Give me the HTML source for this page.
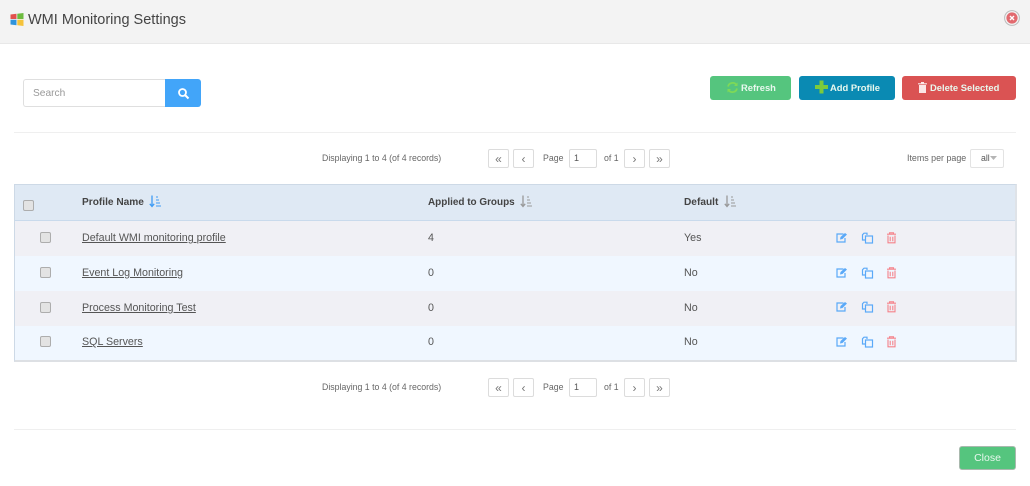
<!DOCTYPE html>
<html><head><meta charset="utf-8">
<style>
html,body{margin:0;padding:0;background:#fff}
#p{position:relative;width:1030px;height:486px;overflow:hidden;background:#fff;font-family:"Liberation Sans",sans-serif;color:#555}
#p div,#p svg,#p a{position:absolute}
.t{white-space:nowrap;line-height:14px}
.b{border-radius:3px;color:#e8f8ee;font-size:9.4px;font-weight:bold;line-height:23px;height:24px;white-space:nowrap;text-align:left}
.pg{width:19px;height:17px;border:1px solid #dcdcdc;border-radius:2px;background:#fff;color:#777;font-size:12px;line-height:18px;text-align:center}
.in{border:1px solid #dcdcdc;border-radius:2px;background:#fff;color:#555;font-size:9px;line-height:17px}
.s{font-size:8.75px;color:#666}
.cb{width:9px;height:9px;background:#e3e3e3;border:1px solid #adadad;border-radius:2px}
.r{left:15px;width:1000px;height:35px}
.c{font-size:10.7px;color:#555}
.h{font-size:10.15px;font-weight:bold;color:#444}
a{color:#555;text-decoration:underline}
</style></head><body><div id="p">

<div style="left:0;top:0;width:1030px;height:43px;background:#f3f3f3;border-bottom:1px solid #e8e8e8"></div>
<svg style="left:10px;top:13px" width="14" height="13" viewBox="0 0 14 13"><path d="M0.5 1.5L6.5 0.8V6H0.5Z" fill="#e2504c"/><path d="M7.3 0.7L13.5 0V6H7.3Z" fill="#6cbb3f"/><path d="M0.5 6.8H6.5V12.2L0.5 11.5Z" fill="#2f94dc"/><path d="M7.3 6.8H13.5V13L7.3 12.3Z" fill="#f5c33b"/></svg>
<div class="t" style="left:28px;top:12px;font-size:14.5px;color:#444;line-height:17px">WMI Monitoring Settings</div>
<svg style="left:1004px;top:10px" width="16" height="16" viewBox="0 0 16 16"><circle cx="8" cy="8" r="7.4" fill="#f4f4f4" stroke="#bbb" stroke-width="1"/><circle cx="8" cy="8" r="5.6" fill="#e26a6f"/><path d="M6 6L10 10M10 6L6 10" stroke="#fff" stroke-width="1.4"/></svg>

<div style="left:23px;top:79px;width:142px;height:26px;border:1px solid #dfdfdf;border-right:0;border-radius:3px 0 0 3px;background:#fff"></div>
<div class="t" style="left:33px;top:86px;font-size:10.2px;color:#999;line-height:15px">Search</div>
<div style="left:165px;top:79px;width:36px;height:28px;background:#42a5f9;border-radius:0 3px 3px 0"></div>
<svg style="left:177px;top:87px" width="13" height="13" viewBox="0 0 13 13"><circle cx="5.5" cy="5.5" r="3.5" fill="none" stroke="#fff" stroke-width="1.8"/><path d="M8 8L11.5 11.5" stroke="#fff" stroke-width="2"/></svg>

<div class="b" style="left:710px;top:76px;width:81px;background:#55c57e"><span style="margin-left:31px">Refresh</span></div>
<svg style="left:726px;top:81px" width="13" height="13" viewBox="0 0 13 13"><path d="M2 5.5A4.7 4.7 0 0 1 10.5 4M11 7.5A4.7 4.7 0 0 1 2.5 9" fill="none" stroke="#7ed957" stroke-width="1.8"/><path d="M11.5 1.5V5H8ZM1.5 11.5V8H5Z" fill="#7ed957"/></svg>
<div class="b" style="left:799px;top:76px;width:96px;background:#0a8ab3"><span style="margin-left:31px">Add Profile</span></div>
<svg style="left:815px;top:80px" width="13" height="14" viewBox="0 0 13 14"><path d="M4.5 0.5H8.5V5H13V9H8.5V13.5H4.5V9H0V5H4.5Z" fill="#7ccb3c"/></svg>
<div class="b" style="left:902px;top:76px;width:114px;background:#da5353"><span style="margin-left:28px">Delete Selected</span></div>
<svg style="left:918px;top:82px" width="9" height="11" viewBox="0 0 9 11"><path d="M0 1.2H3V0H6V1.2H9V2.4H0ZM1 3H8V11H1Z" fill="#fbe6e6"/></svg>

<div style="left:14px;top:132px;width:1002px;height:1px;background:#efefef"></div>

<div class="t s" style="left:322px;top:151px">Displaying 1 to 4 (of 4 records)</div>
<div class="pg" style="left:488px;top:149px">«</div><div class="pg" style="left:513px;top:149px">‹</div>
<div class="t s" style="left:543px;top:151px">Page</div>
<div class="in" style="left:569px;top:149px;width:22px;height:17px;padding-left:4px">1</div>
<div class="t s" style="left:604px;top:151px">of 1</div>
<div class="pg" style="left:624px;top:149px">›</div><div class="pg" style="left:649px;top:149px">»</div>
<div class="t s" style="left:907px;top:151px;font-size:8.9px">Items per page</div>
<div style="left:970px;top:149px;width:32px;height:17px;border:1px solid #e3e3e3;border-radius:2px;background:#fff"></div>
<div class="t s" style="left:981px;top:151px;color:#555">all</div>
<svg style="left:990px;top:156px" width="7" height="4" viewBox="0 0 7 4"><path d="M0 0H7L3.5 4Z" fill="#b5b5b5"/></svg>

<div style="left:14px;top:184px;width:1000px;height:175px;border:1px solid #cdd9e6;border-right:2px solid #dfe3e8;border-bottom:2px solid #dde0e4"></div>
<div class="r" style="top:185px;height:35px;background:#dfe9f4;border-bottom:1px solid #c9daec"></div>
<div class="r" style="top:221px;height:35px;background:#f0f0f5"></div>
<div class="r" style="top:256px;background:#f0f7ff"></div>
<div class="r" style="top:291px;background:#f0f0f5"></div>
<div class="r" style="top:326px;height:34px;background:#f0f7ff"></div>

<div class="cb" style="left:23px;top:200px"></div>
<div class="t h" style="left:82px;top:196px">Profile Name</div>
<svg style="left:149px;top:195px" width="12" height="13" viewBox="0 0 12 13"><path d="M3 0.5V11M0.8 8.8L3 11.5L5.2 8.8" fill="none" stroke="#3f9cf5" stroke-width="1.3"/><path d="M7 2H9M7 5H10M7 8H11M7 11H12" stroke="#3f9cf5" stroke-width="1.1"/></svg>
<div class="t h" style="left:428px;top:196px;font-size:9.95px">Applied to Groups</div>
<svg style="left:520px;top:195px" width="12" height="13" viewBox="0 0 12 13"><path d="M3 0.5V11M0.8 8.8L3 11.5L5.2 8.8" fill="none" stroke="#999" stroke-width="1.3"/><path d="M7 2H9M7 5H10M7 8H11M7 11H12" stroke="#999" stroke-width="1.1"/></svg>
<div class="t h" style="left:684px;top:196px">Default</div>
<svg style="left:724px;top:195px" width="12" height="13" viewBox="0 0 12 13"><path d="M3 0.5V11M0.8 8.8L3 11.5L5.2 8.8" fill="none" stroke="#999" stroke-width="1.3"/><path d="M7 2H9M7 5H10M7 8H11M7 11H12" stroke="#999" stroke-width="1.1"/></svg>

<div class="cb" style="left:40px;top:232px"></div>
<a class="t c" style="left:82px;top:231px">Default WMI monitoring profile</a>
<div class="t c" style="left:428px;top:231px">4</div>
<div class="t c" style="left:684px;top:231px">Yes</div>

<div class="cb" style="left:40px;top:267px"></div>
<a class="t c" style="left:82px;top:266px">Event Log Monitoring</a>
<div class="t c" style="left:428px;top:266px">0</div>
<div class="t c" style="left:684px;top:266px">No</div>

<div class="cb" style="left:40px;top:302px"></div>
<a class="t c" style="left:82px;top:301px">Process Monitoring Test</a>
<div class="t c" style="left:428px;top:301px">0</div>
<div class="t c" style="left:684px;top:301px">No</div>

<div class="cb" style="left:40px;top:336px"></div>
<a class="t c" style="left:82px;top:335px">SQL Servers</a>
<div class="t c" style="left:428px;top:335px">0</div>
<div class="t c" style="left:684px;top:335px">No</div>

<svg style="left:836px;top:232px" width="60" height="12" viewBox="0 0 60 12"><g fill="none" stroke="#5aa9f8" stroke-width="1.2"><path d="M7.5 2H1V10H9V6"/><path d="M4 7.5L4.5 5L9 1L11 2.5L6.5 7Z" fill="#5aa9f8" stroke="none"/><path d="M31 3V1.2H28L26.5 2.7V8H29"/><rect x="29.5" y="4" width="7" height="7"/></g><path d="M51 2.2H60M53.5 2V0.8H57.5V2M52 3.5V10.8H59V3.5M54.2 4.8V9.3M56.8 4.8V9.3" fill="none" stroke="#f5828a" stroke-width="1.1"/></svg>
<svg style="left:836px;top:267px" width="60" height="12" viewBox="0 0 60 12"><g fill="none" stroke="#5aa9f8" stroke-width="1.2"><path d="M7.5 2H1V10H9V6"/><path d="M4 7.5L4.5 5L9 1L11 2.5L6.5 7Z" fill="#5aa9f8" stroke="none"/><path d="M31 3V1.2H28L26.5 2.7V8H29"/><rect x="29.5" y="4" width="7" height="7"/></g><path d="M51 2.2H60M53.5 2V0.8H57.5V2M52 3.5V10.8H59V3.5M54.2 4.8V9.3M56.8 4.8V9.3" fill="none" stroke="#f5828a" stroke-width="1.1"/></svg>
<svg style="left:836px;top:301px" width="60" height="12" viewBox="0 0 60 12"><g fill="none" stroke="#5aa9f8" stroke-width="1.2"><path d="M7.5 2H1V10H9V6"/><path d="M4 7.5L4.5 5L9 1L11 2.5L6.5 7Z" fill="#5aa9f8" stroke="none"/><path d="M31 3V1.2H28L26.5 2.7V8H29"/><rect x="29.5" y="4" width="7" height="7"/></g><path d="M51 2.2H60M53.5 2V0.8H57.5V2M52 3.5V10.8H59V3.5M54.2 4.8V9.3M56.8 4.8V9.3" fill="none" stroke="#f5828a" stroke-width="1.1"/></svg>
<svg style="left:836px;top:336px" width="60" height="12" viewBox="0 0 60 12"><g fill="none" stroke="#5aa9f8" stroke-width="1.2"><path d="M7.5 2H1V10H9V6"/><path d="M4 7.5L4.5 5L9 1L11 2.5L6.5 7Z" fill="#5aa9f8" stroke="none"/><path d="M31 3V1.2H28L26.5 2.7V8H29"/><rect x="29.5" y="4" width="7" height="7"/></g><path d="M51 2.2H60M53.5 2V0.8H57.5V2M52 3.5V10.8H59V3.5M54.2 4.8V9.3M56.8 4.8V9.3" fill="none" stroke="#f5828a" stroke-width="1.1"/></svg>

<div class="t s" style="left:322px;top:380px">Displaying 1 to 4 (of 4 records)</div>
<div class="pg" style="left:488px;top:378px">«</div><div class="pg" style="left:513px;top:378px">‹</div>
<div class="t s" style="left:543px;top:380px">Page</div>
<div class="in" style="left:569px;top:378px;width:22px;height:17px;padding-left:4px">1</div>
<div class="t s" style="left:604px;top:380px">of 1</div>
<div class="pg" style="left:624px;top:378px">›</div><div class="pg" style="left:649px;top:378px">»</div>

<div style="left:14px;top:429px;width:1002px;height:1px;background:#efefef"></div>
<div style="left:959px;top:446px;width:55px;height:22px;background:#55c57e;border:1px solid #a9b9ae;border-radius:3px;color:#e8f8ee;font-size:10.5px;line-height:22px;text-align:center">Close</div>
</div></body></html>
